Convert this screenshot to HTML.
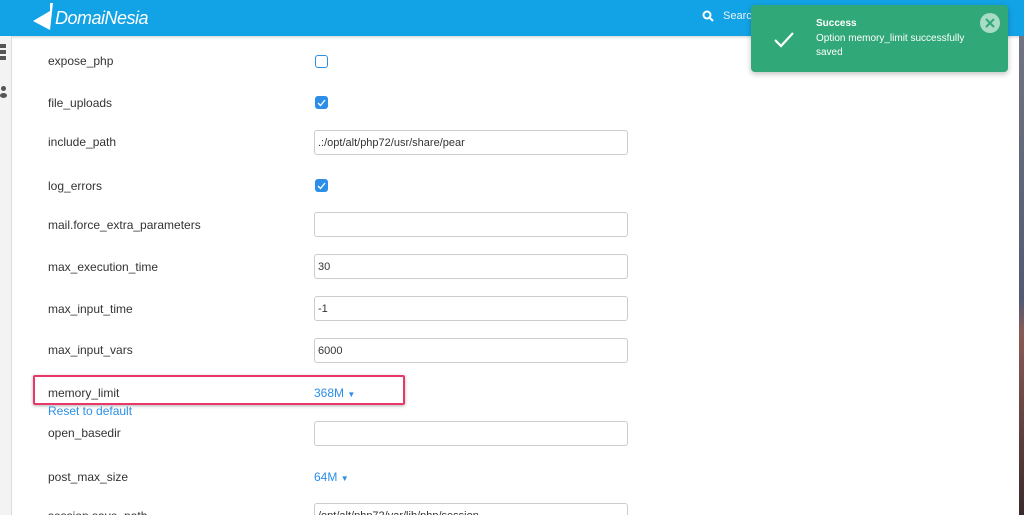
<!DOCTYPE html>
<html style="width:1024px;height:515px;overflow:hidden"><head><style>
*{box-sizing:border-box;margin:0;padding:0}
body{width:1024px;height:515px;overflow:hidden;background:#fff;font-family:"Liberation Sans",sans-serif;position:relative;color:#333}
.hdr{position:absolute;left:0;top:0;width:1024px;height:36px;background:#12a3e6;box-shadow:0 1px 3px rgba(0,0,0,.2)}
.side{position:absolute;left:0;top:36px;width:12px;height:479px;background:#f3f3f3;border-right:1px solid #ddd}
.lbl{position:absolute;left:48px;font-size:12px;color:#333}
.inp{position:absolute;left:314px;width:314px;height:25px;border:1px solid #ccc;border-radius:3px;font-size:11px;padding:6px 0 0 3px;color:#333}
.cb{position:absolute;left:315px;width:13px;height:13px;border-radius:3px}
.cb.off{border:1px solid #2c8ee6;background:#fff}
.cb.on{background:#2c8ee6}
.dd{position:absolute;left:314px;font-size:12px;color:#2c8ee6}
.edge{position:absolute;left:1019px;top:36px;width:5px;height:479px;background:linear-gradient(#707580,#525a73 55%,#8a5a55 62%,#3a2a2a)}
</style></head><body>
<div class="hdr">
<svg style="position:absolute;left:30px;top:2px" width="30" height="30" viewBox="0 0 30 30"><path d="M3 19 L20 9 L20 28 Z" fill="#fff"/><path d="M20 1 L23 1 L20 28 Z" fill="#fff"/></svg>
<div style="position:absolute;left:55px;top:8px;color:#fff;font-style:italic;font-size:18px;letter-spacing:-0.5px">DomaiNesia</div>
<svg style="position:absolute;left:702px;top:10px" width="12" height="12" viewBox="0 0 12 12"><circle cx="5" cy="5" r="3.5" stroke="#fff" stroke-width="2" fill="none"/><path d="M7.5 7.5L11 11" stroke="#fff" stroke-width="2"/></svg>
<div style="position:absolute;left:723px;top:10px;color:#e6f4fc;font-size:11px">Search</div>
</div>
<div class="side">
<div style="position:absolute;left:0;top:8px;width:6px;height:4px;background:#555"></div>
<div style="position:absolute;left:0;top:14px;width:6px;height:4px;background:#555"></div>
<div style="position:absolute;left:0;top:20px;width:6px;height:4px;background:#555"></div>
<div style="position:absolute;left:1px;top:50px;width:5px;height:5px;border-radius:50%;background:#555"></div>
<div style="position:absolute;left:0;top:57px;width:7px;height:5px;border-radius:50%;background:#555"></div>
</div>
<div class="edge"></div>

<div class="lbl" style="top:54px">expose_php</div><div class="cb off" style="top:55px"></div>
<div class="lbl" style="top:96px">file_uploads</div><div class="cb on" style="top:96px"><svg width="13" height="13"><path d="M3 7l2.5 2.5L10 4" stroke="#fff" stroke-width="1.3" fill="none"/></svg></div>
<div class="lbl" style="top:135px">include_path</div><div class="inp" style="top:130px">.:/opt/alt/php72/usr/share/pear</div>
<div class="lbl" style="top:179px">log_errors</div><div class="cb on" style="top:179px"><svg width="13" height="13"><path d="M3 7l2.5 2.5L10 4" stroke="#fff" stroke-width="1.3" fill="none"/></svg></div>
<div class="lbl" style="top:218px">mail.force_extra_parameters</div><div class="inp" style="top:212px"></div>
<div class="lbl" style="top:260px">max_execution_time</div><div class="inp" style="top:254px">30</div>
<div class="lbl" style="top:302px">max_input_time</div><div class="inp" style="top:296px">-1</div>
<div class="lbl" style="top:343px">max_input_vars</div><div class="inp" style="top:338px">6000</div>
<div class="lbl" style="top:386px">memory_limit</div><div class="dd" style="top:386px">368M <span style="font-size:8px">&#9660;</span></div>
<div style="position:absolute;left:33px;top:375px;width:372px;height:30px;border:2px solid #e8386a;border-radius:2px;box-shadow:0 1px 3px rgba(0,0,0,.3)"></div>
<div class="lbl" style="top:404px;color:#2c8ee6">Reset to default</div>
<div class="lbl" style="top:426px">open_basedir</div><div class="inp" style="top:421px"></div>
<div class="lbl" style="top:470px">post_max_size</div><div class="dd" style="top:470px">64M <span style="font-size:8px">&#9660;</span></div>
<div class="lbl" style="top:509px">session.save_path</div><div class="inp" style="top:503px">/opt/alt/php72/var/lib/php/session</div>

<div style="position:absolute;left:751px;top:5px;width:257px;height:67px;background:#30a877;border-radius:4px;box-shadow:0 2px 6px rgba(0,0,0,.25);color:#fff">
<svg style="position:absolute;left:22px;top:26px" width="22" height="18" viewBox="0 0 22 18"><path d="M2 9l6 6L20 2" stroke="#fff" stroke-width="2.2" fill="none"/></svg>
<div style="position:absolute;left:65px;top:13px;font-size:10px;font-weight:bold">Success</div>
<div style="position:absolute;left:65px;top:27px;font-size:10px;line-height:14px;width:160px">Option memory_limit successfully saved</div>
<div style="position:absolute;left:229px;top:8px;width:20px;height:20px;border-radius:50%;background:#a8dcc4"><svg width="20" height="20"><path d="M6 6l8 8M14 6l-8 8" stroke="#30a877" stroke-width="2"/></svg></div>
</div>
</body></html>
